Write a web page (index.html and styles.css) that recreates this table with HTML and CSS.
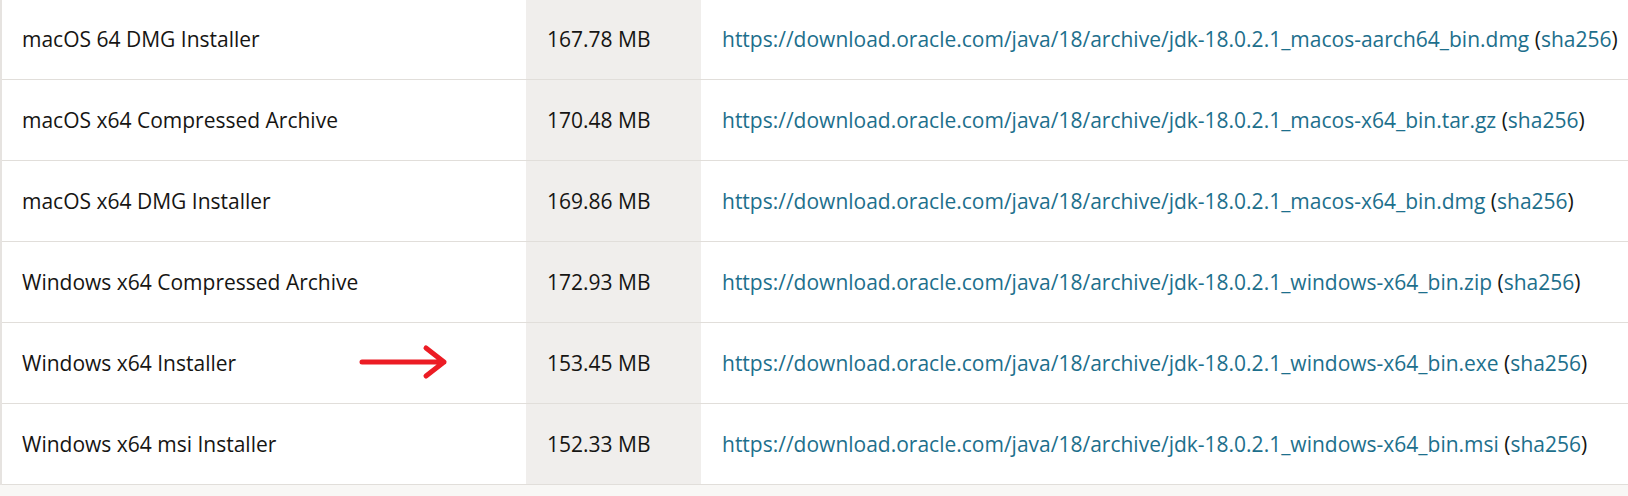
FILE: index.html
```html
<!DOCTYPE html>
<html>
<head>
<meta charset="utf-8">
<link rel="stylesheet" href="styles.css">
</head>
<body>
<div class="page">
  <table class="downloads">
    <tbody>
      <tr>
        <td class="name">macOS 64 DMG Installer</td>
        <td class="size">167.78 MB</td>
        <td class="link"><a href="#">https://download.oracle.com/java/18/archive/jdk-18.0.2.1_macos-aarch64_bin.dmg</a> (<a href="#">sha256</a>)</td>
      </tr>
      <tr>
        <td class="name">macOS x64 Compressed Archive</td>
        <td class="size">170.48 MB</td>
        <td class="link"><a href="#">https://download.oracle.com/java/18/archive/jdk-18.0.2.1_macos-x64_bin.tar.gz</a> (<a href="#">sha256</a>)</td>
      </tr>
      <tr>
        <td class="name">macOS x64 DMG Installer</td>
        <td class="size">169.86 MB</td>
        <td class="link"><a href="#">https://download.oracle.com/java/18/archive/jdk-18.0.2.1_macos-x64_bin.dmg</a> (<a href="#">sha256</a>)</td>
      </tr>
      <tr>
        <td class="name">Windows x64 Compressed Archive</td>
        <td class="size">172.93 MB</td>
        <td class="link"><a href="#">https://download.oracle.com/java/18/archive/jdk-18.0.2.1_windows-x64_bin.zip</a> (<a href="#">sha256</a>)</td>
      </tr>
      <tr>
        <td class="name"><div class="name-wrap"><span>Windows x64 Installer</span><svg class="arrow" width="90" height="36" viewBox="0 0 90 36"><path d="M3 18 H85 M67 4 L85 18 L67 32" fill="none" stroke="#ec1c24" stroke-width="5" stroke-linecap="round" stroke-linejoin="round"/></svg></div></td>
        <td class="size">153.45 MB</td>
        <td class="link"><a href="#">https://download.oracle.com/java/18/archive/jdk-18.0.2.1_windows-x64_bin.exe</a> (<a href="#">sha256</a>)</td>
      </tr>
      <tr>
        <td class="name">Windows x64 msi Installer</td>
        <td class="size">152.33 MB</td>
        <td class="link"><a href="#">https://download.oracle.com/java/18/archive/jdk-18.0.2.1_windows-x64_bin.msi</a> (<a href="#">sha256</a>)</td>
      </tr>
    </tbody>
  </table>
</div>
</body>
</html>
```

FILE: styles.css
```css
html, body {
  margin: 0;
  padding: 0;
  background: #f8f7f5;
}
.page {
  width: 1628px;
  height: 496px;
  overflow: hidden;
  background: #f8f7f5;
}
.downloads {
  border-collapse: collapse;
  width: 1628px;
  margin-top: -1px;
  font-family: "Open Sans", sans-serif;
  font-size: 21px;
  color: #161513;
  background: #fff;
  border-left: 2px solid #e6e3e0;
  table-layout: fixed;
}
.downloads td {
  height: 80px;
  padding: 0 0 0 21px;
  border-bottom: 1px solid #e1deda;
  vertical-align: middle;
  white-space: nowrap;
}
.downloads td.name {
  width: 504px;
  padding-left: 20px;
}
.downloads td.size {
  width: 154px;
  background: #f0eeec;
}
.downloads td.link {
  color: #161513;
}
.downloads a {
  color: #1d6f8c;
  text-decoration: none;
}
.name-wrap {
  display: flex;
  align-items: center;
}
.arrow {
  margin-left: 123px;
  margin-top: -2px;
}
```
